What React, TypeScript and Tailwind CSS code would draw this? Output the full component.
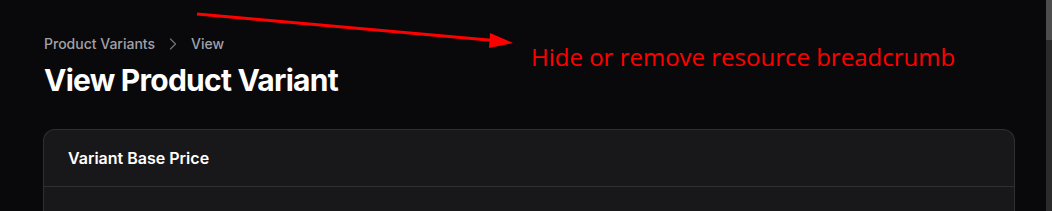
import { ChevronRight } from "lucide-react";

function Breadcrumbs() {
  return (
    <nav className="flex items-center gap-2 text-sm font-medium text-[#a1a1aa]">
      <span>Product Variants</span>
      <ChevronRight className="h-5 w-5 text-[#71717a]" strokeWidth={1.5} />
      <span>View</span>
    </nav>
  );
}

function Annotation() {
  return (
    <>
      <svg className="pointer-events-none absolute left-0 top-0" width="1046" height="211">
        <line x1="197" y1="14" x2="494" y2="40.5" stroke="#ff0000" strokeWidth="3" />
        <polygon points="513,43 490,33 489,48" fill="#ff0000" />
      </svg>
      <p className="absolute left-[531px] top-[41px] font-['Open_Sans',sans-serif] text-[24px] leading-[32px] text-[#ff0000]">
        Hide or remove resource breadcrumb
      </p>
    </>
  );
}

export default function App() {
  return (
    <div className="flex h-[211px] overflow-hidden bg-[#09090b] font-['Inter',sans-serif]">
      <div className="relative flex flex-1 flex-col">
        <div className="h-[3px] bg-[#1c1c1f]" />
        <main className="flex flex-col pl-[43px] pr-[31px] pt-[34px]">
          <header className="flex flex-col gap-2 pl-px">
            <Breadcrumbs />
            <h1 className="text-3xl font-bold tracking-tight text-white">View Product Variant</h1>
          </header>

          <section className="mt-[31px] rounded-xl border border-white/10 bg-[#18181b]">
            <div className="px-6 py-4">
              <h2 className="text-base font-semibold leading-6 text-white">Variant Base Price</h2>
            </div>
            <div className="grid grid-cols-4 gap-6 border-t border-white/10 p-6">
              <div className="h-9 rounded-lg border border-white/10" />
              <div className="h-9 rounded-lg border border-white/10" />
              <div className="h-9 rounded-lg border border-white/10" />
              <div className="h-9 rounded-lg border border-white/10" />
            </div>
          </section>
        </main>
        <Annotation />
      </div>
      <div className="flex w-[6px] flex-col bg-[#2b2b2b]">
        <div className="h-[40px] bg-[#4d4d4d]" />
      </div>
    </div>
  );
}
